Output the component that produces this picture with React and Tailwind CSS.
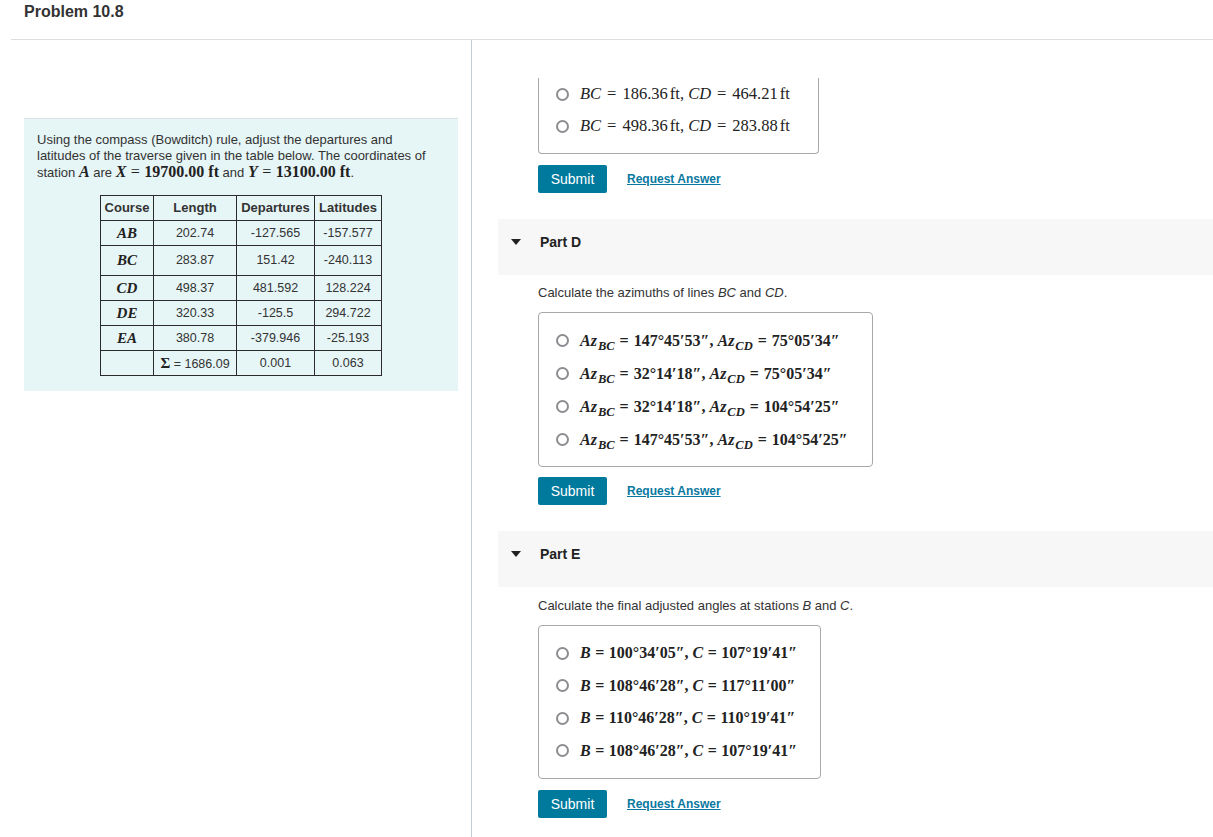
import React from "react";

const serif = { fontFamily: '"Liberation Serif", "DejaVu Serif", serif' };

function Eq({ w = "mx-[4.5px]" }) {
  return <span className={`${w} not-italic`}>=</span>;
}

function V({ children }) {
  return <span className="italic">{children}</span>;
}

function Az({ sub }) {
  return (
    <>
      <span className="italic">Az</span>
      <span className="italic text-[12.5px] relative top-[4px] ml-[1px]">{sub}</span>
    </>
  );
}

function Radio() {
  return <span className="w-[13px] h-[13px] rounded-full border-2 border-[#8c8c91] shrink-0 bg-white" />;
}

function OptionRow({ children, h = "h-[33px]", bold = false, size = "text-[16px]" }) {
  return (
    <div className={`${h} flex items-center pl-[17px]`}>
      <Radio />
      <span
        className={`ml-[11px] ${size} text-[#222] whitespace-nowrap ${bold ? "font-bold" : ""}`}
        style={serif}
      >
        {children}
      </span>
    </div>
  );
}

function SubmitRow({ mt }) {
  return (
    <div className={`${mt} ml-[66px] flex items-center`}>
      <button className="w-[69px] h-[28px] bg-[#007a9c] text-white text-[14px] rounded-[2px] leading-[28px]">
        Submit
      </button>
      <a className="ml-[20px] text-[12px] font-bold underline text-[#0a78a0] cursor-pointer">Request Answer</a>
    </div>
  );
}

function PartHeader({ label }) {
  return (
    <div className="mt-[26px] ml-[26px] h-[56px] bg-[#f7f7f7] flex items-center pl-[13px] pb-[10px]">
      <svg width="10" height="6" viewBox="0 0 10 6">
        <path d="M0 0 L10 0 L5 6 Z" fill="#222" />
      </svg>
      <span className="ml-[19px] text-[14px] font-bold text-[#222]">{label}</span>
    </div>
  );
}

const rows = [
  ["AB", "202.74", "-127.565", "-157.577", "h-[25px]"],
  ["BC", "283.87", "151.42", "-240.113", "h-[30px]"],
  ["CD", "498.37", "481.592", "128.224", "h-[25px]"],
  ["DE", "320.33", "-125.5", "294.722", "h-[25px]"],
  ["EA", "380.78", "-379.946", "-25.193", "h-[25px]"],
];

const m = "text-[16px] leading-[16px] text-[#222] font-bold";

export default function App() {
  return (
    <div
      className="w-[1213px] h-[837px] overflow-hidden bg-white text-[#333]"
      style={{ fontFamily: '"Liberation Sans", Arial, sans-serif' }}
    >
      {/* header */}
      <div className="ml-[11px] h-[40px] border-b border-[#dedede] pt-[2px] pl-[13px]">
        <div className="text-[16px] font-bold leading-[20px] text-[#333]">Problem 10.8</div>
      </div>

      <div className="flex h-[797px]">
        {/* left column */}
        <div className="ml-[11px] w-[461px] border-r border-[#c6cdd8] pt-[78px] pl-[13px] shrink-0">
          <div className="w-[434px] bg-[#e6f5f6] border-t border-[#dbe3e4] pt-[13px] pb-[15px] px-[13px]">
            <p className="text-[13px] leading-[16px] text-[#333] w-[400px]">
              Using the compass (Bowditch) rule, adjust the departures and latitudes of the traverse given in the
              table below. The coordinates of station{" "}
              <span className={`${m} italic`} style={serif}>A</span> are{" "}
              <span className={`${m} italic`} style={serif}>X</span>
              <span className="text-[16px] leading-[16px] text-[#222] mx-[4.5px]" style={serif}>=</span>
              <span className={m} style={serif}>19700.00 ft</span> and{" "}
              <span className={`${m} italic`} style={serif}>Y</span>
              <span className="text-[16px] leading-[16px] text-[#222] mx-[4.5px]" style={serif}>=</span>
              <span className={m} style={serif}>13100.00 ft</span>.
            </p>
            <div className="mt-[14px] flex justify-center">
              <table className="border-collapse text-[12.5px] text-[#333] table-fixed">
                <thead>
                  <tr className="h-[25px]">
                    <th className="w-[53px] border border-[#2a2a2a] font-bold text-[13px] px-0">Course</th>
                    <th className="w-[83px] border border-[#2a2a2a] font-bold text-[13px]">Length</th>
                    <th className="w-[78px] border border-[#2a2a2a] font-bold text-[13px] px-0">Departures</th>
                    <th className="w-[67px] border border-[#2a2a2a] font-bold text-[13px] px-0">Latitudes</th>
                  </tr>
                </thead>
                <tbody>
                  {rows.map(([c, l, d, la, h]) => (
                    <tr key={c} className={h}>
                      <td className="border border-[#2a2a2a] text-center">
                        <span className="text-[15px] italic font-bold text-[#222]" style={serif}>{c}</span>
                      </td>
                      <td className="border border-[#2a2a2a] text-center">{l}</td>
                      <td className="border border-[#2a2a2a] text-center">{d}</td>
                      <td className="border border-[#2a2a2a] text-center">{la}</td>
                    </tr>
                  ))}
                  <tr className="h-[25px]">
                    <td className="border border-[#2a2a2a]" />
                    <td className="border border-[#2a2a2a] text-center whitespace-nowrap">
                      <span className="text-[15px] font-bold text-[#222]" style={serif}>Σ</span> = 1686.09
                    </td>
                    <td className="border border-[#2a2a2a] text-center">0.001</td>
                    <td className="border border-[#2a2a2a] text-center">0.063</td>
                  </tr>
                </tbody>
              </table>
            </div>
          </div>
        </div>

        {/* right column */}
        <div className="flex-1 pt-[38px]">
          {/* Part C answer (scrolled, top clipped) */}
          <div className="ml-[66px] w-[281px] border-x border-b border-[#a8a8a8] rounded-b-[4px] pb-[11px]">
            <OptionRow h="h-[32px]" size="text-[16.5px]">
              <V>BC</V>
              <Eq w="mx-[6px]" />
              186.36<span className="ml-[2px]">ft</span>, <V>CD</V>
              <Eq w="mx-[6px]" />
              464.21<span className="ml-[2px]">ft</span>
            </OptionRow>
            <OptionRow h="h-[32px]" size="text-[16.5px]">
              <V>BC</V>
              <Eq w="mx-[6px]" />
              498.36<span className="ml-[2px]">ft</span>, <V>CD</V>
              <Eq w="mx-[6px]" />
              283.88<span className="ml-[2px]">ft</span>
            </OptionRow>
          </div>
          <SubmitRow mt="mt-[11px]" />

          {/* Part D */}
          <PartHeader label="Part D" />
          <div className="ml-[66px]">
            <p className="mt-[10px] text-[13px] leading-[16px] text-[#333]">
              Calculate the azimuths of lines <i>BC</i> and <i>CD</i>.
            </p>
            <div className="mt-[11px] w-[335px] border border-[#a8a8a8] rounded-[4px] pt-[11px] pb-[10px]">
              <OptionRow bold>
                <Az sub="BC" />
                <Eq w="mx-[5px]" />
                147°45′53″, <Az sub="CD" />
                <Eq w="mx-[5px]" />
                75°05′34″
              </OptionRow>
              <OptionRow bold>
                <Az sub="BC" />
                <Eq w="mx-[5px]" />
                32°14′18″, <Az sub="CD" />
                <Eq w="mx-[5px]" />
                75°05′34″
              </OptionRow>
              <OptionRow bold>
                <Az sub="BC" />
                <Eq w="mx-[5px]" />
                32°14′18″, <Az sub="CD" />
                <Eq w="mx-[5px]" />
                104°54′25″
              </OptionRow>
              <OptionRow bold>
                <Az sub="BC" />
                <Eq w="mx-[5px]" />
                147°45′53″, <Az sub="CD" />
                <Eq w="mx-[5px]" />
                104°54′25″
              </OptionRow>
            </div>
          </div>
          <SubmitRow mt="mt-[10px]" />

          {/* Part E */}
          <PartHeader label="Part E" />
          <div className="ml-[66px]">
            <p className="mt-[11px] text-[13px] leading-[16px] text-[#333]">
              Calculate the final adjusted angles at stations <i>B</i> and <i>C</i>.
            </p>
            <div className="mt-[11px] w-[283px] border border-[#a8a8a8] rounded-[4px] pt-[11px] pb-[11px]">
              <OptionRow bold h="h-[32.5px]">
                <V>B</V>
                <Eq />
                100°34′05″, <V>C</V>
                <Eq />
                107°19′41″
              </OptionRow>
              <OptionRow bold h="h-[32.5px]">
                <V>B</V>
                <Eq />
                108°46′28″, <V>C</V>
                <Eq />
                117°11′00″
              </OptionRow>
              <OptionRow bold h="h-[32.5px]">
                <V>B</V>
                <Eq />
                110°46′28″, <V>C</V>
                <Eq />
                110°19′41″
              </OptionRow>
              <OptionRow bold h="h-[32.5px]">
                <V>B</V>
                <Eq />
                108°46′28″, <V>C</V>
                <Eq />
                107°19′41″
              </OptionRow>
            </div>
          </div>
          <SubmitRow mt="mt-[11px]" />
        </div>
      </div>
    </div>
  );
}
